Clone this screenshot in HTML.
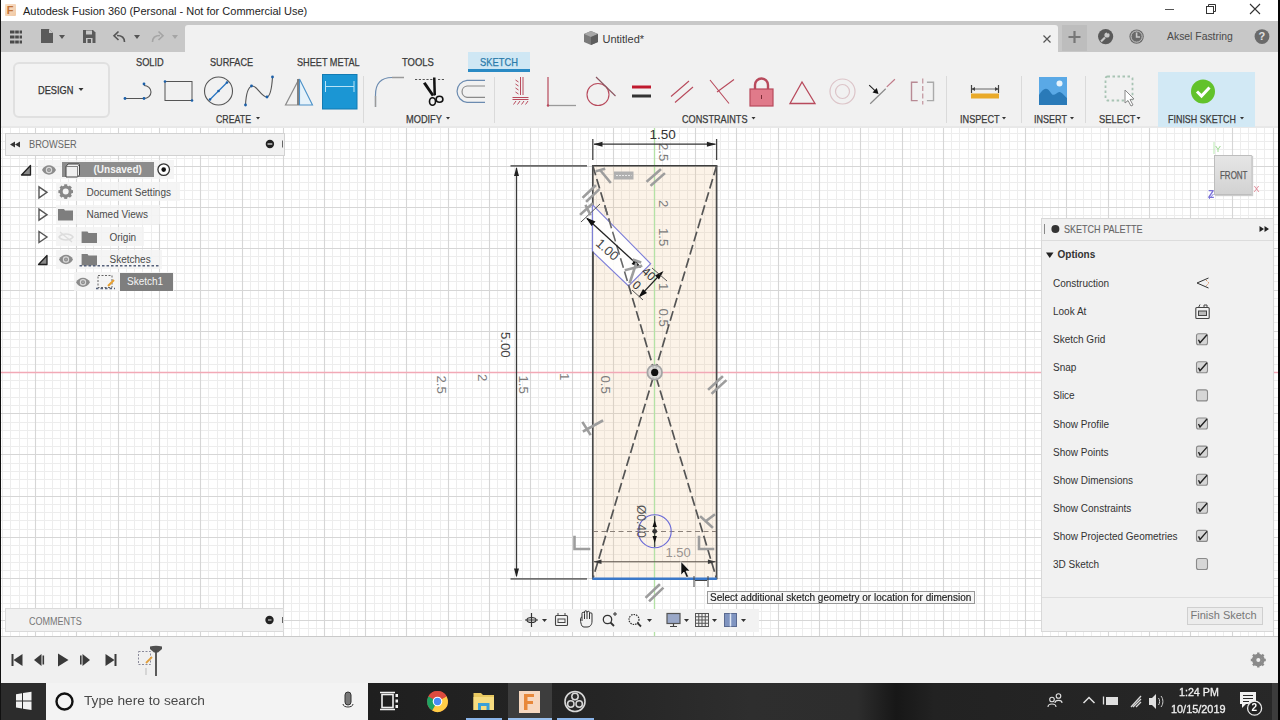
<!DOCTYPE html>
<html><head><meta charset="utf-8">
<style>
*{margin:0;padding:0;box-sizing:border-box}
html,body{width:1280px;height:720px;overflow:hidden;background:#fff;font-family:"Liberation Sans",sans-serif;color:#333}
.a{position:absolute}
.t{position:absolute;white-space:nowrap;line-height:1}
.lbl{position:absolute;white-space:nowrap;line-height:1;font-size:10.5px;color:#3a3a3a;transform-origin:0 0;-webkit-text-stroke:0.25px currentColor}
svg{position:absolute;overflow:visible}
#wrap{position:absolute;left:0;top:0;width:1280px;height:720px;overflow:hidden;filter:blur(0.5px)}
</style></head>
<body><div id="wrap">
<!-- TITLE BAR -->
<div class="a" style="left:0;top:0;width:1280px;height:22px;background:#fff"></div>
<div class="a" style="left:4.6px;top:3.8px;width:11.2px;height:12.5px;border-radius:1px;background:linear-gradient(135deg,#f9e2cc,#f1c9a4)"></div>
<div class="t" style="left:6.8px;top:4.8px;font-size:11px;font-weight:700;color:#c27236">F</div>
<div class="t" style="left:23px;top:5.7px;font-size:11px;color:#1e1e1e">Autodesk Fusion 360 (Personal - Not for Commercial Use)</div>
<svg style="left:0;top:0" width="1280" height="22">
 <path d="M1165 9.5H1174" stroke="#555" stroke-width="1"/>
 <rect x="1206.5" y="6.5" width="7" height="7" fill="none" stroke="#333" stroke-width="1"/>
 <path d="M1208.5 6.5V4.5H1215.5V11.5H1213.5" fill="none" stroke="#333" stroke-width="1"/>
 <path d="M1250 4L1260 14M1260 4L1250 14" stroke="#333" stroke-width="1.1"/>
</svg>

<!-- TAB BAR -->
<div class="a" style="left:0;top:21px;width:1278px;height:31px;background:#c8c8c8"></div>
<div class="a" style="left:185px;top:25px;width:873px;height:27px;background:#f1f1f1;border-radius:3px 3px 0 0"></div>
<div class="a" style="left:1062px;top:25px;width:25px;height:26px;background:#bdbdbd"></div>
<svg style="left:0;top:22px" width="1280" height="30">
 <!-- grid icon -->
 <g fill="#4a4a4a">
  <rect x="10" y="8.5" width="4.5" height="3"/><rect x="15.2" y="8.5" width="3.6" height="3"/><rect x="19.6" y="8.5" width="2.4" height="3"/>
  <rect x="10" y="13.5" width="4.5" height="3"/><rect x="15.2" y="13.5" width="3.6" height="3"/><rect x="19.6" y="13.5" width="2.4" height="3"/>
  <rect x="10" y="18.5" width="4.5" height="3"/><rect x="15.2" y="18.5" width="3.6" height="3"/><rect x="19.6" y="18.5" width="2.4" height="3"/>
 </g>
 <!-- file -->
 <path d="M41 7H49L53 11V21H41Z" fill="#5a5a5a"/>
 <path d="M49 7V11H53" fill="#c8c8c8"/>
 <path d="M59 13H65L62 17Z" fill="#555"/>
 <!-- save -->
 <path d="M83 8H93L95.5 10.5V21H83Z" fill="#5a5a5a"/>
 <rect x="86" y="8.5" width="6" height="4" fill="#c8c8c8"/>
 <rect x="86" y="16" width="6.5" height="5" fill="#c8c8c8"/>
 <rect x="87.5" y="17" width="3.5" height="4" fill="#5a5a5a"/>
 <!-- undo -->
 <path d="M124.5 20C124.5 15 122 13.5 117 13.5" fill="none" stroke="#555" stroke-width="1.6"/>
 <path d="M118.5 9.5L114 13.8L118.5 18" fill="none" stroke="#555" stroke-width="1.6"/>
 <path d="M134 13H140L137 17Z" fill="#555"/>
 <!-- redo -->
 <path d="M152.5 20C152.5 15 155 13.5 160 13.5" fill="none" stroke="#a5a5a5" stroke-width="1.6"/>
 <path d="M158.5 9.5L163 13.8L158.5 18" fill="none" stroke="#a5a5a5" stroke-width="1.6"/>
 <path d="M172 13H178L175 17Z" fill="#a5a5a5"/>
 <!-- doc cube -->
 <path d="M584 12L591 9L598 12V20L591 23L584 20Z" fill="#7a7a7a"/>
 <path d="M584 12L591 15L598 12L591 9Z" fill="#a8a8a8"/>
 <path d="M591 15V23L598 20V12Z" fill="#5e5e5e"/>
 <!-- close x -->
 <path d="M1043.5 13.5L1050.5 20.5M1050.5 13.5L1043.5 20.5" stroke="#555" stroke-width="1.2"/>
 <!-- plus -->
 <path d="M1074.5 9V21M1068.5 15H1080.5" stroke="#777" stroke-width="2.2"/>
 <!-- wrench -->
 <circle cx="1105.6" cy="14.6" r="7.6" fill="#5a5a5a"/>
 <path d="M1101 19.5L1105 15.5" stroke="#c8c8c8" stroke-width="2.2"/>
 <circle cx="1107" cy="13" r="2.6" fill="#c8c8c8"/>
 <path d="M1107 10.5L1110.5 10" stroke="#5a5a5a" stroke-width="2"/>
 <!-- clock -->
 <circle cx="1136.6" cy="14.6" r="7.2" fill="#6a6a6a"/>
 <circle cx="1136.6" cy="14.6" r="5.6" fill="none" stroke="#c8c8c8" stroke-width="1"/>
 <path d="M1136.6 10.5V15H1140" fill="none" stroke="#c8c8c8" stroke-width="1.6"/>
 <!-- help -->
 <circle cx="1262" cy="14.6" r="7.4" fill="#6a6a6a"/>
</svg>
<div class="t" style="left:1167px;top:32px;font-size:10.4px;color:#4a4a4a">Aksel Fastring</div>
<div class="t" style="left:1258.5px;top:31px;font-size:11px;font-weight:700;color:#e0e0e0">?</div>
<div class="t" style="left:602.5px;top:33.7px;font-size:11px;color:#3a3a3a">Untitled*</div>

<!-- TOOLBAR -->
<div class="a" style="left:0;top:52px;width:1278px;height:76px;background:#f1f1f1"></div>
<div class="a" style="left:0;top:126px;width:1278px;height:2px;background:#e8e8e8"></div>
<div class="a" style="left:13px;top:62px;width:97px;height:56px;border:2px solid #e0e0e0;border-radius:6px;background:#f3f3f3"></div>
<div class="lbl" style="left:38px;top:85px;font-size:10.5px;color:#333;transform:scaleX(0.88)">DESIGN</div>
<div class="a" style="left:468px;top:52px;width:62px;height:20px;background:#cfe7f4"></div>
<div class="a" style="left:468px;top:69px;width:62px;height:2.5px;background:#2a8ac4"></div>
<div class="lbl" style="left:136px;top:56.8px;transform:scaleX(0.88)">SOLID</div>
<div class="lbl" style="left:210px;top:56.8px;transform:scaleX(0.87)">SURFACE</div>
<div class="lbl" style="left:297px;top:56.8px;transform:scaleX(0.87)">SHEET METAL</div>
<div class="lbl" style="left:402px;top:56.8px;transform:scaleX(0.9)">TOOLS</div>
<div class="lbl" style="left:480px;top:56.8px;color:#2b7bab;transform:scaleX(0.89)">SKETCH</div>
<div class="lbl" style="left:216px;top:114px;transform:scaleX(0.84)">CREATE</div>
<div class="lbl" style="left:406px;top:114px;transform:scaleX(0.88)">MODIFY</div>
<div class="lbl" style="left:682px;top:114px;transform:scaleX(0.87)">CONSTRAINTS</div>
<div class="lbl" style="left:960px;top:114px;transform:scaleX(0.87)">INSPECT</div>
<div class="lbl" style="left:1034px;top:114px;transform:scaleX(0.86)">INSERT</div>
<div class="lbl" style="left:1099px;top:114px;transform:scaleX(0.89)">SELECT</div>
<div class="a" style="left:1158px;top:72px;width:97px;height:55px;background:#d2e9f5"></div>
<div class="lbl" style="left:1168px;top:114px;transform:scaleX(0.85)">FINISH SKETCH</div>
<svg style="left:0;top:0" width="1280" height="130">
 <g fill="#333">
  <path d="M78.5 88H83.5L81 91Z"/>
  <path d="M256 117H260L258 119.5Z"/>
  <path d="M446 117H450L448 119.5Z"/>
  <path d="M751.5 117H755.5L753.5 119.5Z"/>
  <path d="M1002 117H1006L1004 119.5Z"/>
  <path d="M1070 117H1074L1072 119.5Z"/>
  <path d="M1136.5 117H1140.5L1138.5 119.5Z"/>
  <path d="M1240 117H1244L1242 119.5Z"/>
 </g>
 <!-- separators -->
 <g stroke="#dadada" stroke-width="1">
  <path d="M363.5 76V123"/><path d="M494.5 77V123"/><path d="M946.5 76V123"/><path d="M1021.5 76V123"/><path d="M1085.5 76V123"/>
 </g>
 <!-- line+arc -->
 <path d="M125 98.5H145" stroke="#555" stroke-width="1"/>
 <path d="M144 85.5A7 6.5 0 0 1 144 98.5" fill="none" stroke="#555" stroke-width="1.1"/>
 <g fill="#1b5fa8"><circle cx="125" cy="98.5" r="1.4"/><circle cx="144" cy="98.5" r="1.4"/><circle cx="144" cy="84" r="1.4"/></g>
 <!-- rect -->
 <rect x="165" y="81.5" width="27" height="19" fill="none" stroke="#555" stroke-width="1"/>
 <g fill="#1b5fa8"><circle cx="165" cy="81.5" r="1.3"/><circle cx="192" cy="100.5" r="1.3"/></g>
 <!-- circle -->
 <circle cx="218.5" cy="91" r="14" fill="none" stroke="#555" stroke-width="1.1"/>
 <path d="M210 99.5L227 82.5" stroke="#2673c2" stroke-width="1.2"/>
 <g fill="#1b5fa8"><circle cx="210" cy="99.5" r="1.3"/><circle cx="218.5" cy="91" r="1.3"/><circle cx="227" cy="82.5" r="1.3"/></g>
 <!-- spline -->
 <path d="M245.5 105C246 95 248 87 252 86C257 85 261 97 267 97C271 96 272 85 272.5 77" fill="none" stroke="#555" stroke-width="1.1"/>
 <g fill="#1b5fa8"><circle cx="245.5" cy="105" r="1.4"/><circle cx="251.5" cy="86" r="1.4"/><circle cx="267" cy="97" r="1.4"/><circle cx="272.5" cy="77" r="1.4"/></g>
 <!-- mirror triangle -->
 <path d="M299 79L285.5 105H299" fill="none" stroke="#8a8a8a" stroke-width="1.2"/>
 <path d="M299.5 79V105H312.5Z" fill="#e6f2fa" stroke="#4a90c8" stroke-width="1.1"/>
 <path d="M298 79V105" stroke="#777" stroke-width="1.8"/>
 <!-- blue dim box -->
 <rect x="322.5" y="74.5" width="34.5" height="34.5" fill="#1b96d4" stroke="#137bb3" stroke-width="1"/>
 <path d="M325.5 86.5H354" stroke="#b8e2f6" stroke-width="1"/>
 <path d="M325.5 81V92M354 81V92" stroke="#b8e2f6" stroke-width="1"/>
 <!-- fillet -->
 <path d="M375.5 107V95C375.5 83 381 77.5 392 77.5H404" fill="none" stroke="#6b8bb0" stroke-width="1.2"/>
 <path d="M375.5 107V96M392 77.5H404" stroke="#9a9a9a" stroke-width="1.4"/>
 <!-- scissors -->
 <path d="M415 79.5H434M438 79.5H445" stroke="#555" stroke-width="1" stroke-dasharray="2.2 1.6"/>
 <path d="M423 83.5L425.5 82L434 94.5L432 96.5Z" fill="#111"/>
 <path d="M433 77.5L435.5 77.5L436 95L433.5 96Z" fill="#111"/>
 <ellipse cx="432.5" cy="101.5" rx="3" ry="3.8" fill="none" stroke="#111" stroke-width="1.6"/>
 <ellipse cx="439.5" cy="99.3" rx="3.4" ry="3" fill="none" stroke="#111" stroke-width="1.6"/>
 <!-- offset -->
 <path d="M485 80.4H467A11 11 0 0 0 467 102.3H485" fill="none" stroke="#6b8bb0" stroke-width="1.2"/>
 <path d="M485 86H467A5.7 5.7 0 0 0 467 97.3H485" fill="none" stroke="#8a8a8a" stroke-width="1.2"/>
 <!-- coincident/horiz constraint -->
 <g stroke="#b84a5c" stroke-width="1" fill="none">
  <path d="M520.5 77V95M523 77V95"/>
  <path d="M512.5 97.5H528.5M512.5 99.5H528.5"/>
  <path d="M515.5 80l3 2M515.5 84l3 2M515.5 88l3 2M515.5 92l3 2"/>
  <path d="M513.5 104.5l2.5 -3.5M517.5 104.5l2.5 -3.5M521.5 104.5l2.5 -3.5M525.5 104.5l2.5 -3.5"/>
 </g>
 <!-- perpendicular L -->
 <path d="M548 77V105.5" stroke="#b84a5c" stroke-width="1.2"/>
 <path d="M548 105.5H576" stroke="#9a9a9a" stroke-width="1.3"/>
 <circle cx="548" cy="105.5" r="1.2" fill="#b84a5c"/>
 <!-- tangent -->
 <circle cx="598" cy="94.5" r="11" fill="none" stroke="#b84a5c" stroke-width="1.1"/>
 <path d="M596 77L615.5 96" stroke="#8a5560" stroke-width="1.1"/>
 <!-- equal -->
 <path d="M632 87H651" stroke="#c01a2e" stroke-width="3"/>
 <path d="M632 96H651" stroke="#333" stroke-width="3"/>
 <!-- parallel -->
 <path d="M671 96.5L689 81M675 102.5L693 87" stroke="#b84a5c" stroke-width="1.1"/>
 <!-- perpendicular X -->
 <path d="M710 80L729 103.5M717 92L734 79.5" stroke="#b84a5c" stroke-width="1.1"/>
 <!-- lock -->
 <path d="M755 89V85A6.5 6.5 0 0 1 768 85V89" fill="none" stroke="#b84a5c" stroke-width="2.4"/>
 <rect x="750" y="89" width="23" height="17" fill="#e07a8a" stroke="#b84a5c" stroke-width="1.2"/>
 <path d="M761.5 95V99" stroke="#7a2a35" stroke-width="1"/>
 <!-- triangle -->
 <path d="M802 82L790 103.5H815Z" fill="none" stroke="#b84a5c" stroke-width="1.3"/>
 <!-- concentric -->
 <circle cx="842.5" cy="91.5" r="12.5" fill="none" stroke="#dcc4c8" stroke-width="1.2"/>
 <circle cx="842.5" cy="91.5" r="7" fill="none" stroke="#dcc4c8" stroke-width="1.2"/>
 <!-- midpoint -->
 <path d="M870.2 103.8L885.7 88.7" stroke="#8a8a8a" stroke-width="1.2"/>
 <path d="M886.8 86.9L894.9 79.2" stroke="#c07a88" stroke-width="1.2"/>
 <path d="M869.2 85.1L876 91.6" stroke="#222" stroke-width="1.1"/>
 <path d="M878.5 94L872.5 92.5L876.8 88Z" fill="#111"/>
 <!-- symmetry -->
 <path d="M917.7 82.3H911.5V100.6H917.7" fill="none" stroke="#b88a94" stroke-width="1.4"/>
 <path d="M926.9 82.3H933.5V100.6H926.9" fill="none" stroke="#aaa" stroke-width="1.4"/>
 <path d="M922.7 78.5V104.5" stroke="#c8a0a8" stroke-width="1.4" stroke-dasharray="5 2.5"/>
 <!-- inspect -->
 <path d="M971.5 89H998.5" stroke="#666" stroke-width="1"/>
 <path d="M971.5 85V93M998.5 85V93" stroke="#444" stroke-width="1.2"/>
 <path d="M975 87L971.5 89L975 91ZM995 87L998.5 89L995 91Z" fill="#444"/>
 <rect x="971" y="93.5" width="28" height="5" fill="#e9aa2a"/>
 <!-- insert image -->
 <rect x="1039" y="77" width="28" height="28" fill="#5aa9e6"/>
 <path d="M1039 105V95C1043 88 1047 86 1051 93C1054 98 1057 91 1060 92C1063 93 1065 97 1067 98V105Z" fill="#2a7ab8"/>
 <circle cx="1059.5" cy="83.5" r="3" fill="#e8f4fc"/>
 <!-- select -->
 <rect x="1105.5" y="76.5" width="27" height="24" rx="2" fill="none" stroke="#a8c4b4" stroke-width="1.8" stroke-dasharray="2.5 2.5"/>
 <path d="M1125 90V103L1128 100.5L1131 106L1133 105L1130 99.5L1134 99Z" fill="#fff" stroke="#888" stroke-width="1"/>
 <!-- finish check -->
 <circle cx="1203" cy="91.5" r="12" fill="#62c22a"/>
 <path d="M1197 91.5L1201.5 96L1209.5 87.5" fill="none" stroke="#fff" stroke-width="3"/>
</svg>

<!-- CANVAS -->
<div class="a" style="left:0;top:128px;width:1278px;height:508px;background:#fff"></div>
<svg style="left:0;top:0" width="1280" height="720">
 <defs><clipPath id="cc"><rect x="0" y="128" width="1278" height="508"/></clipPath></defs>
 <g clip-path="url(#cc)">
 <path d="M2.5 128V636M10.5 128V636M19.5 128V636M27.5 128V636M44.5 128V636M52.5 128V636M60.5 128V636M68.5 128V636M85.5 128V636M93.5 128V636M101.5 128V636M110.5 128V636M126.5 128V636M134.5 128V636M142.5 128V636M151.5 128V636M167.5 128V636M176.5 128V636M184.5 128V636M192.5 128V636M208.5 128V636M217.5 128V636M225.5 128V636M233.5 128V636M250.5 128V636M258.5 128V636M266.5 128V636M274.5 128V636M291.5 128V636M299.5 128V636M308.5 128V636M316.5 128V636M332.5 128V636M340.5 128V636M349.5 128V636M357.5 128V636M374.5 128V636M382.5 128V636M390.5 128V636M398.5 128V636M415.5 128V636M423.5 128V636M431.5 128V636M440.5 128V636M456.5 128V636M464.5 128V636M472.5 128V636M481.5 128V636M497.5 128V636M506.5 128V636M514.5 128V636M522.5 128V636M538.5 128V636M547.5 128V636M555.5 128V636M563.5 128V636M580.5 128V636M588.5 128V636M596.5 128V636M604.5 128V636M621.5 128V636M629.5 128V636M638.5 128V636M646.5 128V636M662.5 128V636M670.5 128V636M679.5 128V636M687.5 128V636M704.5 128V636M712.5 128V636M720.5 128V636M728.5 128V636M745.5 128V636M753.5 128V636M761.5 128V636M770.5 128V636M786.5 128V636M794.5 128V636M802.5 128V636M811.5 128V636M827.5 128V636M836.5 128V636M844.5 128V636M852.5 128V636M868.5 128V636M877.5 128V636M885.5 128V636M893.5 128V636M910.5 128V636M918.5 128V636M926.5 128V636M934.5 128V636M951.5 128V636M959.5 128V636M968.5 128V636M976.5 128V636M992.5 128V636M1000.5 128V636M1009.5 128V636M1017.5 128V636M1034.5 128V636M1042.5 128V636M1050.5 128V636M1058.5 128V636M1075.5 128V636M1083.5 128V636M1091.5 128V636M1100.5 128V636M1116.5 128V636M1124.5 128V636M1132.5 128V636M1141.5 128V636M1157.5 128V636M1166.5 128V636M1174.5 128V636M1182.5 128V636M1198.5 128V636M1207.5 128V636M1215.5 128V636M1223.5 128V636M1240.5 128V636M1248.5 128V636M1256.5 128V636M1264.5 128V636M0 133.5H1280M0 141.5H1280M0 149.5H1280M0 158.5H1280M0 174.5H1280M0 182.5H1280M0 190.5H1280M0 199.5H1280M0 215.5H1280M0 224.5H1280M0 232.5H1280M0 240.5H1280M0 256.5H1280M0 265.5H1280M0 273.5H1280M0 281.5H1280M0 298.5H1280M0 306.5H1280M0 314.5H1280M0 322.5H1280M0 339.5H1280M0 347.5H1280M0 356.5H1280M0 364.5H1280M0 380.5H1280M0 388.5H1280M0 397.5H1280M0 405.5H1280M0 422.5H1280M0 430.5H1280M0 438.5H1280M0 446.5H1280M0 463.5H1280M0 471.5H1280M0 479.5H1280M0 488.5H1280M0 504.5H1280M0 512.5H1280M0 520.5H1280M0 529.5H1280M0 545.5H1280M0 554.5H1280M0 562.5H1280M0 570.5H1280M0 586.5H1280M0 595.5H1280M0 603.5H1280M0 611.5H1280M0 628.5H1280" stroke="#ededed" stroke-width="1" fill="none"/><path d="M35.5 128V636M76.5 128V636M118.5 128V636M159.5 128V636M200.5 128V636M242.5 128V636M283.5 128V636M324.5 128V636M365.5 128V636M406.5 128V636M448.5 128V636M489.5 128V636M530.5 128V636M572.5 128V636M613.5 128V636M654.5 128V636M695.5 128V636M736.5 128V636M778.5 128V636M819.5 128V636M860.5 128V636M902.5 128V636M943.5 128V636M984.5 128V636M1025.5 128V636M1066.5 128V636M1108.5 128V636M1149.5 128V636M1190.5 128V636M1232.5 128V636M1273.5 128V636M0 166.5H1280M0 207.5H1280M0 248.5H1280M0 290.5H1280M0 331.5H1280M0 372.5H1280M0 413.5H1280M0 454.5H1280M0 496.5H1280M0 537.5H1280M0 578.5H1280M0 620.5H1280" stroke="#d6d6d6" stroke-width="1.1" fill="none"/>
 <!-- rect fill -->
 <rect x="592.5" y="165.5" width="124" height="413" fill="#f0c38c" fill-opacity="0.2"/>
 <!-- axes -->
 <path d="M0 372.5H1278" stroke="#f2a9b6" stroke-width="1.6"/>
 <path d="M654.5 128V636" stroke="#b4e2a6" stroke-width="1.3"/>
 <!-- grid labels -->
 <g font-family="Liberation Sans" font-size="13.2" fill="#7c7c7c">
  <text transform="translate(658.5,143) rotate(90)">2.5</text>
  <text transform="translate(658.5,200) rotate(90)">2</text>
  <text transform="translate(658.5,228) rotate(90)">1.5</text>
  <text transform="translate(658.5,283) rotate(90)">1</text>
  <text transform="translate(658.5,308.5) rotate(90)">0.5</text>
  <text transform="translate(436.5,375.5) rotate(90)">2.5</text>
  <text transform="translate(477.5,374) rotate(90)">2</text>
  <text transform="translate(518.5,375.5) rotate(90)">1.5</text>
  <text transform="translate(559.5,373) rotate(90)">1</text>
  <text transform="translate(601,375.5) rotate(90)">0.5</text>
 </g>
 <!-- dim: vertical 5.00 -->
 <path d="M510.5 165.8H587" stroke="#6a6a6a" stroke-width="1.8"/>
 <path d="M510.5 578.8H587" stroke="#707070" stroke-width="1.8"/>
 <path d="M516.5 168V576" stroke="#3a3a3a" stroke-width="1.3"/>
 <path d="M516.5 167L514 176H519ZM516.5 577.5L514 568.5H519Z" fill="#222"/>
 <text transform="translate(500.5,332) rotate(90)" font-family="Liberation Sans" font-size="13.2" fill="#444">5.00</text>
 <!-- dim: horizontal 1.50 top -->
 <path d="M592.8 139V160M716.6 139V160" stroke="#444" stroke-width="1.3"/>
 <path d="M594 144.2H715.5" stroke="#333" stroke-width="1.3"/>
 <path d="M593.5 144.2L602.5 141.7V146.7ZM715.9 144.2L706.9 141.7V146.7Z" fill="#222"/>
 <text x="649.5" y="138.5" font-family="Liberation Sans" font-size="13.5" fill="#333">1.50</text>
 <!-- rect edges -->
 <path d="M592.8 165.7H716.6" stroke="#3d3d3d" stroke-width="1.6"/>
 <path d="M592.8 165V579.5M716.6 165V579.5" stroke="#4a4a4a" stroke-width="1.7"/>
 <!-- dashed construction -->
 <g stroke="#555" stroke-width="1.7" stroke-dasharray="10 3.8" fill="none">
  <path d="M592.8 165.7L654.7 372.4L592.8 578.8"/>
  <path d="M716.6 165.7L654.7 372.4L716.6 578.8"/>
 </g>
 <!-- horizontal dashed at circle -->
 <path d="M593 531.5H716" stroke="#8a8078" stroke-width="1.2" stroke-dasharray="5 3.5"/>
 <!-- bottom blue edge -->
 <path d="M592.5 578.8H716.7" stroke="#3a78c9" stroke-width="2.4"/>
 <!-- center point -->
 <circle cx="654.7" cy="372.4" r="7.3" fill="#d8d8d8" fill-opacity="0.85" stroke="#a5a5a5" stroke-width="1.8"/>
 <circle cx="654.7" cy="372.4" r="3.6" fill="#111"/>
 <!-- circle -->
 <circle cx="654.7" cy="531.3" r="16.5" fill="none" stroke="#6a6ad8" stroke-width="1.1"/>
 <circle cx="654.7" cy="531.3" r="2.4" fill="#333"/>
 <path d="M654.7 516V547" stroke="#333" stroke-width="1.1"/>
 <path d="M654.7 520L652.5 527H656.9ZM654.7 543L652.5 536H656.9Z" fill="#111"/>
 <text transform="translate(636.5,505) rotate(90)" font-family="Liberation Sans" font-size="12" fill="#555">&#216;0.40</text>
 <!-- bottom dim 1.50 -->
 <path d="M594 561.7H715.5" stroke="#5a5048" stroke-width="1.1"/>
 <path d="M593.5 561.7L601.5 559.5V564ZM715.9 561.7L707.9 559.5V564Z" fill="#3a3a3a"/>
 <text x="665.5" y="556.5" font-family="Liberation Sans" font-size="13" fill="#9a9490">1.50</text>
 <path d="M694 576V587M708 576V587M695 580.5H707" stroke="#444" stroke-width="1"/>
 <!-- cursor -->
 <path d="M681 561.5V575L684 572L686.5 577.5L688.5 576.5L686 571H690Z" fill="#111" stroke="#fff" stroke-width="0.6"/>
 <!-- white slot box w/ 1.00 dim -->
 <path d="M592.4 204.7L650.7 263.75L628.5 286L592.4 251.5Z" fill="#ffffff" fill-opacity="0.88" stroke="#7d7ed8" stroke-width="1.1"/>
 <path d="M592.8 251.5V290" stroke="#4a4a4a" stroke-width="1.7"/>
 <path d="M603.5 201.5L629 286.5" stroke="#666" stroke-width="1.5" stroke-dasharray="10 3.8" stroke-dashoffset="9.76"/>
  <path d="M587 218.5L640 267" stroke="#222" stroke-width="1.3"/>
 <path d="M586 217.5L595.5 221.5L591.5 226ZM641 268L631.5 264L635.5 259.5Z" fill="#111"/>
 <path d="M581 222L600 204" stroke="#555" stroke-width="1"/>
 <text transform="translate(595,244.5) rotate(42)" font-family="Liberation Sans" font-size="13" fill="#444">1.00</text>
 <path d="M640 296L662 272.5" stroke="#222" stroke-width="1.1"/>
 <path d="M638.5 297.5L643 289L647 293ZM663.5 271L659 279.5L655 275.5Z" fill="#111"/>
 <path d="M632 290L643 300M652 268L667 281" stroke="#444" stroke-width="0.9"/>
 <text transform="translate(641,272.5) rotate(42)" font-family="Liberation Sans" font-size="12" fill="#333">40</text>
 <text transform="translate(631.5,286) rotate(42)" font-family="Liberation Sans" font-size="12" fill="#333">0</text>
 <!-- constraint glyphs (gray) -->
 <g stroke="#9d9d9d" stroke-width="2.6" fill="none" stroke-linecap="square">
  <path d="M597 171L604 169M600.5 170.5L610 182"/>
  <path d="M647.5 181L660 170M651.5 185L664 174"/>
  <path d="M709 389L722 377M712.5 393L725.5 381"/>
  <path d="M646.5 597L659 585M650 600.5L662.5 588.5"/>
  <path d="M583.5 197L595 186M587 201L598.5 190"/><path d="M581 214L592 204M586 206L590 214"/>
  <path d="M584 431L602 421M583 423L590 434"/>
  <path d="M574.5 537V549M574.5 549H589"/>
  <path d="M699 537V549M699 549H713"/>
  <path d="M701 517L712 527M706 521L714 515"/>
  <path d="M630 282L636 264M626 270L641 266M634 260L640 262"/>
 </g>
 <rect x="614" y="171.5" width="19.5" height="8" fill="#b0b0b0"/><path d="M616 175.5H631.5" stroke="#e8e8e8" stroke-width="1" stroke-dasharray="2 1"/>
 </g>
</svg>

<!-- BROWSER -->
<div class="a" style="left:5px;top:132.5px;width:280px;height:23px;background:#f1f1f1;border:1.3px solid #d2d2d2"></div>
<div class="lbl" style="left:29px;top:139.3px;font-size:10.5px;color:#666;-webkit-text-stroke:0;transform:scaleX(0.88)">BROWSER</div>
<div class="a" style="left:38px;top:160px;width:136px;height:19px;background:#f2f2f2;opacity:.8"></div>
<div class="a" style="left:56px;top:182px;width:124px;height:19px;background:#f2f2f2;opacity:.8"></div>
<div class="a" style="left:56px;top:205px;width:104px;height:19px;background:#f2f2f2;opacity:.8"></div>
<div class="a" style="left:56px;top:227px;width:88px;height:19px;background:#f2f2f2;opacity:.8"></div>
<div class="a" style="left:56px;top:250px;width:106px;height:19px;background:#f2f2f2;opacity:.8"></div>
<div class="a" style="left:74px;top:272px;width:100px;height:19px;background:#f2f2f2;opacity:.8"></div>
<div class="a" style="left:62px;top:162px;width:91.5px;height:15px;background:#8c8c8c"></div>
<div class="t" style="left:93.5px;top:165px;font-size:10px;font-weight:700;color:#f4f4f4">(Unsaved)</div>
<div class="a" style="left:119.5px;top:273px;width:53px;height:17.5px;background:#7e7e7e"></div>
<div class="t" style="left:127px;top:277px;font-size:10px;color:#f4f4f4">Sketch1</div>
<div class="t" style="left:86.5px;top:187.5px;font-size:10px;color:#4a4a4a">Document Settings</div>
<div class="t" style="left:86.5px;top:210px;font-size:10px;color:#4a4a4a">Named Views</div>
<div class="t" style="left:109.5px;top:232.5px;font-size:10px;color:#4a4a4a">Origin</div>
<div class="t" style="left:109.5px;top:255px;font-size:10px;color:#4a4a4a">Sketches</div>
<svg style="left:0;top:0" width="300" height="300">
 <path d="M10 144.5L15 141.5V147.5ZM15 144.5L20 141.5V147.5Z" fill="#333"/>
 <circle cx="269.9" cy="144" r="4.2" fill="#222"/>
 <path d="M267.5 144H272.3" stroke="#ddd" stroke-width="1.3"/>
 <path d="M282.5 140.5V147.5" stroke="#666" stroke-width="1"/>
 <!-- row unsaved -->
 <path d="M21.5 175L30.5 165.5V175Z" fill="#8a8a8a" stroke="#222" stroke-width="1.3" stroke-linejoin="round"/>
 <path d="M42 170C45 163.8 53 163.8 56 170C53 176.2 45 176.2 42 170Z" fill="#8c8c8c"/><circle cx="49" cy="170" r="2.6" fill="none" stroke="#d8d8d8" stroke-width="1.2"/><circle cx="49" cy="170" r="1" fill="#aaa"/>
 <path d="M66 166.5L68 164H79L79.5 164.5V175L77.5 177H66Z" fill="#f0f0f0" stroke="#444" stroke-width="1"/><path d="M66 166.5H77.5V177M77.5 166.5L79.5 164.5" fill="none" stroke="#666" stroke-width="0.8"/>
 <circle cx="163.7" cy="169.6" r="5.8" fill="#fff" stroke="#333" stroke-width="1.3"/>
 <circle cx="163.7" cy="169.6" r="2.3" fill="#111"/>
 <!-- triangles -->
 <g fill="none" stroke="#555" stroke-width="1.4">
  <path d="M39 186.8L47 192.3L39 197.8Z"/>
  <path d="M39 209.2L47 214.7L39 220.2Z"/>
  <path d="M39 231.5L47 237L39 242.5Z"/>
 </g>
 <path d="M38.5 264.5L47 255.5V264.5Z" fill="#8a8a8a" stroke="#222" stroke-width="1.3" stroke-linejoin="round"/>
 <!-- gear -->
 <g fill="#888"><rect x="64.2" y="184.3" width="3" height="3.5" transform="rotate(0 65.7 191.6)"/><rect x="64.2" y="184.3" width="3" height="3.5" transform="rotate(45 65.7 191.6)"/><rect x="64.2" y="184.3" width="3" height="3.5" transform="rotate(90 65.7 191.6)"/><rect x="64.2" y="184.3" width="3" height="3.5" transform="rotate(135 65.7 191.6)"/><rect x="64.2" y="184.3" width="3" height="3.5" transform="rotate(180 65.7 191.6)"/><rect x="64.2" y="184.3" width="3" height="3.5" transform="rotate(225 65.7 191.6)"/><rect x="64.2" y="184.3" width="3" height="3.5" transform="rotate(270 65.7 191.6)"/><rect x="64.2" y="184.3" width="3" height="3.5" transform="rotate(315 65.7 191.6)"/></g>
 <circle cx="65.7" cy="191.6" r="4.6" fill="none" stroke="#888" stroke-width="3.2"/>
 <!-- folders -->
 <path d="M58 209H64L65 210.5H73V220.5H58Z" fill="#7e7e7e"/>
 <path d="M81.6 231.5H87.5L88.5 233H97V243H81.6Z" fill="#7e7e7e"/>
 <path d="M81.6 254H87.5L88.5 255.5H97V265.5H81.6Z" fill="#7e7e7e"/>
 <!-- eye off faded -->
 <path d="M59 237C62 233 70 233 73 237C70 241 62 241 59 237Z" fill="none" stroke="#dcdcdc" stroke-width="1.5"/>
 <path d="M60 232L72 242" stroke="#dcdcdc" stroke-width="1.2"/>
 <!-- eyes -->
 <path d="M59 259.5C62 253.3 70 253.3 73 259.5C70 265.7 62 265.7 59 259.5Z" fill="#8c8c8c"/><circle cx="66" cy="259.5" r="2.6" fill="none" stroke="#d8d8d8" stroke-width="1.2"/><circle cx="66" cy="259.5" r="1" fill="#aaa"/>
 <path d="M76 282.3C79 276.1 87 276.1 90 282.3C87 288.5 79 288.5 76 282.3Z" fill="#8c8c8c"/><circle cx="83" cy="282.3" r="2.6" fill="none" stroke="#d8d8d8" stroke-width="1.2"/><circle cx="83" cy="282.3" r="1" fill="#aaa"/>
 <path d="M79.5 265.8H160" stroke="#55607a" stroke-width="1.6" stroke-dasharray="2.5 2"/>
 <!-- sketch icon -->
 <rect x="98" y="275.5" width="14" height="12" fill="none" stroke="#666" stroke-width="1" stroke-dasharray="2 1.5"/>
 <path d="M108 286L114 280" stroke="#e8a030" stroke-width="2"/>
 <path d="M96 288.5H115" stroke="#55607a" stroke-width="1.4" stroke-dasharray="2.5 2"/>
</svg>

<!-- COMMENTS -->
<div class="a" style="left:5px;top:608px;width:279px;height:24px;background:#f1f1f1;border:1.3px solid #dadada"></div>
<div class="lbl" style="left:29px;top:615.5px;font-size:10.5px;color:#777;-webkit-text-stroke:0;transform:scaleX(0.86)">COMMENTS</div>
<svg style="left:0;top:600px" width="300" height="40">
 <circle cx="269.5" cy="20" r="4.2" fill="#222"/>
 <path d="M268 20H271.5" stroke="#bbb" stroke-width="1.3"/>
 <path d="M282.5 17V23" stroke="#666" stroke-width="1"/>
</svg>

<!-- VIEWCUBE -->
<div class="a" style="left:1213.5px;top:154.5px;width:38px;height:40px;background:linear-gradient(#e6e6e6,#d2d2d2);border:1px solid #bdbdbd;border-right-color:#cfcfcf;box-shadow:1px 1px 1px #ccc"></div>
<div class="lbl" style="left:1219.5px;top:169.5px;font-size:10.5px;color:#5a5a5a;transform:scaleX(0.76)">FRONT</div>
<svg style="left:0;top:0" width="1280" height="220">
 <path d="M1214 154V142" stroke="#b8e8b0" stroke-width="1"/>
 <text x="1215" y="152" font-family="Liberation Sans" font-size="9" fill="#9ad88f">Y</text>
 <path d="M1213.5 194L1209 199" stroke="#8080e0" stroke-width="1"/>
 <text x="1208" y="198" font-family="Liberation Sans" font-size="10" font-weight="700" fill="#7a70d8">Z</text>
 <text x="1253.5" y="192" font-family="Liberation Sans" font-size="9" fill="#e08a98">X</text>
</svg>

<!-- SKETCH PALETTE -->
<div class="a" style="left:1041px;top:217.5px;width:232.5px;height:414px;background:#f1f1f1;border:1px solid #d8d8d8"></div>
<div class="a" style="left:1041.5px;top:240px;width:231.5px;height:1.2px;background:#dcdcdc"></div>
<div class="a" style="left:1041.5px;top:596.5px;width:231.5px;height:1px;background:#dedede"></div>
<div class="lbl" style="left:1064px;top:223.7px;font-size:10.5px;color:#666;-webkit-text-stroke:0.1px #666;transform:scaleX(0.86)">SKETCH PALETTE</div>
<div class="t" style="left:1057.5px;top:250px;font-size:10px;font-weight:700;color:#333">Options</div>
<div class="t" style="left:1053px;top:279.0px;font-size:10px;color:#333">Construction</div>
<div class="t" style="left:1053px;top:307.1px;font-size:10px;color:#333">Look At</div>
<div class="t" style="left:1053px;top:335.2px;font-size:10px;color:#333">Sketch Grid</div>
<div class="t" style="left:1053px;top:363.3px;font-size:10px;color:#333">Snap</div>
<div class="t" style="left:1053px;top:391.4px;font-size:10px;color:#333">Slice</div>
<div class="t" style="left:1053px;top:419.5px;font-size:10px;color:#333">Show Profile</div>
<div class="t" style="left:1053px;top:447.6px;font-size:10px;color:#333">Show Points</div>
<div class="t" style="left:1053px;top:475.7px;font-size:10px;color:#333">Show Dimensions</div>
<div class="t" style="left:1053px;top:503.8px;font-size:10px;color:#333">Show Constraints</div>
<div class="t" style="left:1053px;top:531.9px;font-size:10px;color:#333">Show Projected Geometries</div>
<div class="t" style="left:1053px;top:560.0px;font-size:10px;color:#333">3D Sketch</div>
<div class="a" style="left:1187px;top:606.5px;width:76px;height:18px;background:#ececec;border:1px solid #cfcfcf"></div>
<div class="t" style="left:1190.5px;top:610px;font-size:11px;color:#777">Finish Sketch</div>
<svg style="left:0;top:0" width="1280" height="640">
 <path d="M1044.5 224V234" stroke="#888" stroke-width="1"/>
 <circle cx="1055.4" cy="229" r="4" fill="#333"/>
 <path d="M1259.5 226L1264 229L1259.5 232ZM1264.5 226L1269 229L1264.5 232Z" fill="#222"/>
 <path d="M1046 252.5H1053.5L1049.75 258Z" fill="#222"/>
 <!-- construction icon -->
 <path d="M1208.5 278L1197 283L1208.5 288" fill="none" stroke="#333" stroke-width="1"/>
 <path d="M1206 280L1209 283L1206 286" fill="none" stroke="#d89060" stroke-width="1" stroke-dasharray="1.5 1"/>
 <!-- look at icon -->
 <rect x="1195.8" y="307.5" width="13.4" height="11" rx="1" fill="none" stroke="#444" stroke-width="1.1"/>
 <rect x="1198.5" y="311" width="8" height="4.5" fill="#bbb" stroke="#444" stroke-width="1"/>
 <path d="M1198.5 307.5L1200 304.5M1204 307.5V305H1207V307.5" fill="none" stroke="#444" stroke-width="1"/>
 <g fill="#d6d6d6" stroke="#8a8a8a" stroke-width="1.1">
  <rect x="1196.5" y="333.7" width="11" height="11" rx="2"/>
  <rect x="1196.5" y="361.8" width="11" height="11" rx="2"/>
  <rect x="1196.5" y="389.9" width="11" height="11" rx="2"/>
  <rect x="1196.5" y="418.0" width="11" height="11" rx="2"/>
  <rect x="1196.5" y="446.1" width="11" height="11" rx="2"/>
  <rect x="1196.5" y="474.2" width="11" height="11" rx="2"/>
  <rect x="1196.5" y="502.3" width="11" height="11" rx="2"/>
  <rect x="1196.5" y="530.4" width="11" height="11" rx="2"/>
  <rect x="1196.5" y="558.5" width="11" height="11" rx="2"/>
 </g>
 <g fill="none" stroke="#222" stroke-width="1.4">
  <path transform="translate(0,0.19999999999999996)" d="M1198.5 339.5L1200 342.5L1207 334.5"/>
  <path transform="translate(0,0.30000000000000004)" d="M1198.5 367.5L1200 370.5L1207 362.5"/>
  <path transform="translate(0,0.5)" d="M1198.5 423.5L1200 426.5L1207 418.5"/>
  <path transform="translate(0,0.6000000000000001)" d="M1198.5 451.5L1200 454.5L1207 446.5"/>
  <path transform="translate(0,0.7)" d="M1198.5 479.5L1200 482.5L1207 474.5"/>
  <path transform="translate(0,0.8)" d="M1198.5 507.5L1200 510.5L1207 502.5"/>
  <path transform="translate(0,0.8999999999999999)" d="M1198.5 535.5L1200 538.5L1207 530.5"/>
 </g>
</svg>

<!-- NAV BAR -->
<div class="a" style="left:521.5px;top:609px;width:237.5px;height:23px;background:#f2f2f2"></div>
<svg style="left:0;top:0" width="1280" height="720">
 <g stroke="#333" stroke-width="1.2" fill="none">
  <path d="M525 620H538M531.5 613V627"/>
  <ellipse cx="531.5" cy="620" rx="4.5" ry="2.5"/>
 </g>
 <path d="M542 619H547L544.5 622Z" fill="#333"/>
 <rect x="555.5" y="615.5" width="12" height="10" rx="1" fill="none" stroke="#444" stroke-width="1.1"/>
 <rect x="558" y="619" width="7" height="3.5" fill="none" stroke="#444" stroke-width="1"/>
 <path d="M558 615.5V613M565 615.5V613" stroke="#444" stroke-width="1"/>
 <path d="M582 626C580 622 580 617 582 617V621M582 617V613.5A1 1 0 0 1 584.5 613.5V619M584.5 613V612A1 1 0 0 1 587 612V619M587 612.5A1 1 0 0 1 589.5 612.5V619M589.5 614A1 1 0 0 1 592 614V621C592 625 590 627 587 627H584C583 627 582.5 626.5 582 626" fill="none" stroke="#333" stroke-width="1"/>
 <circle cx="607.5" cy="619.5" r="4.2" fill="none" stroke="#333" stroke-width="1.3"/>
 <path d="M610.5 622.5L614 626" stroke="#333" stroke-width="1.8"/>
 <path d="M613 614H617M615 612V616" stroke="#333" stroke-width="1"/>
 <circle cx="634" cy="619.5" r="5" fill="none" stroke="#333" stroke-width="1.2" stroke-dasharray="1.5 1"/>
 <path d="M637.5 623L641 626.5" stroke="#333" stroke-width="1.8"/>
 <path d="M647 619H652L649.5 622Z" fill="#333"/>
 <rect x="667" y="613.5" width="13" height="10" fill="#9aa8c8" stroke="#555" stroke-width="1.2"/>
 <path d="M670 626.5H677M673.5 623.5V626.5" stroke="#444" stroke-width="1.2"/>
 <path d="M684 619H689L686.5 622Z" fill="#333"/>
 <g stroke="#555" stroke-width="1" fill="none">
  <rect x="695.5" y="613.5" width="13" height="13"/>
  <path d="M698.75 613.5V626.5M702 613.5V626.5M705.25 613.5V626.5M695.5 616.75H708.5M695.5 620H708.5M695.5 623.25H708.5"/>
 </g>
 <path d="M712 619H717L714.5 622Z" fill="#333"/>
 <rect x="724.5" y="613.5" width="12" height="13" fill="#7f94c0" stroke="#5a6a90" stroke-width="1"/>
 <path d="M730.5 613.5V626.5" stroke="#e0e8f4" stroke-width="1.5"/>
 <path d="M741 619H746L743.5 622Z" fill="#333"/>
</svg>

<!-- TOOLTIP -->
<div class="a" style="left:706.5px;top:591px;width:268.5px;height:12.5px;background:#f6f6f6;border:1px solid #999"></div>
<div class="t" style="left:710px;top:592.8px;font-size:10px;color:#1a1a1a;-webkit-text-stroke:0.15px #1a1a1a">Select additional sketch geometry or location for dimension</div>

<!-- TIMELINE -->
<div class="a" style="left:0;top:635.5px;width:1278px;height:47px;background:#f0f0f0;border-top:1.2px solid #c9c9c9"></div>
<svg style="left:0;top:630px" width="1280" height="55">
 <g fill="#3a3a3a">
  <rect x="11.5" y="24" width="2" height="12"/><path d="M13.5 30L22.5 24V36Z"/>
  <path d="M34 30L41.5 24V36Z"/><rect x="42.5" y="25.5" width="1.6" height="9"/>
  <path d="M58 23.5L68.5 30L58 36.5Z"/>
  <rect x="80" y="25.5" width="1.6" height="9"/><path d="M82.5 24L90 30L82.5 36Z"/>
  <path d="M105.5 24L114.5 30L105.5 36Z"/><rect x="114.5" y="24" width="2" height="12"/>
 </g>
 <rect x="138.5" y="21.5" width="12" height="13" fill="none" stroke="#8a8a9a" stroke-width="1" stroke-dasharray="2 1.5"/>
 <path d="M146 33L152 27" stroke="#e0a040" stroke-width="1.8"/>
 <path d="M150 16.5Q156 15 162 16.5V19L158 22.5H154L150 19Z" fill="#505050"/>
 <path d="M156 20V46" stroke="#4a4a4a" stroke-width="1.8"/>
 <path d="M146 38V45" stroke="#bbb" stroke-width="1"/>
 <!-- gear -->
 <circle cx="1258.3" cy="30" r="4.8" fill="none" stroke="#8a8a8a" stroke-width="3"/>
 <path d="M1258.3 22.5V37.5M1250.8 30H1265.8M1253 24.7L1263.6 35.3M1253 35.3L1263.6 24.7" stroke="#8a8a8a" stroke-width="2.4"/>
 <circle cx="1258.3" cy="30" r="2" fill="#f0f0f0"/>
</svg>

<!-- TASKBAR -->
<div class="a" style="left:0;top:682.5px;width:1280px;height:37.5px;background:linear-gradient(90deg,#1f1f1f 0%,#1f1f1f 29%,#252525 47%,#2e2e2e 58.6%,#2d2d2d 67%,#171717 70%,#222 73%,#282828 100%)"></div>
<div class="a" style="left:0;top:682.5px;width:46px;height:37.5px;background:#2c2c2c"></div>
<div class="a" style="left:46px;top:682.5px;width:322px;height:37.5px;background:#f3f3f3"></div>
<div class="a" style="left:507.5px;top:682.5px;width:44.5px;height:37.5px;background:#3d3d3d"></div>
<div class="a" style="left:465.5px;top:718px;width:36.5px;height:2px;background:#8ab4e8"></div>
<div class="a" style="left:507.5px;top:718px;width:44.5px;height:2px;background:#9ac0ee"></div>
<div class="a" style="left:557px;top:718px;width:37px;height:2px;background:#8ab4e8"></div>
<div class="a" style="left:1272px;top:682.5px;width:6px;height:37.5px;background:#3c3c3c"></div>
<div class="t" style="left:84px;top:694px;font-size:13.7px;color:#4a4a4a">Type here to search</div>
<div class="t" style="left:1179px;top:687px;font-size:10.7px;color:#f0f0f0;-webkit-text-stroke:0.3px #f0f0f0">1:24 PM</div>
<div class="t" style="left:1171px;top:704px;font-size:10.9px;color:#f0f0f0;-webkit-text-stroke:0.3px #f0f0f0">10/15/2019</div>
<svg style="left:0;top:682px" width="1280" height="38">
 <!-- windows logo -->
 <g fill="#f2f2f2">
  <path d="M16 12.2L22 11.3V18.4H16Z"/><path d="M23 11.1L31.5 9.8V18.4H23Z"/>
  <path d="M16 19.4H22V26.5L16 25.6Z"/><path d="M23 19.4H31.5V28L23 26.8Z"/>
 </g>
 <circle cx="64.5" cy="19.5" r="8" fill="none" stroke="#111" stroke-width="2.4"/>
 <!-- mic -->
 <rect x="345" y="10" width="6" height="13" rx="3" fill="#777" stroke="#333" stroke-width="1"/>
 <path d="M343 22C343 26 353 26 353 22" fill="none" stroke="#333" stroke-width="1"/>
 <!-- task view -->
 <g fill="none" stroke="#f0f0f0" stroke-width="1.6">
  <rect x="382" y="12.5" width="11" height="13"/>
 </g>
 <path d="M380 10.5H395M380 27.5H395" stroke="#f0f0f0" stroke-width="1.4"/>
 <rect x="395.5" y="12" width="2.5" height="3" fill="#f0f0f0"/><rect x="395.5" y="17.5" width="2.5" height="3" fill="#f0f0f0"/><rect x="395.5" y="23" width="2.5" height="3" fill="#f0f0f0"/>
 <!-- chrome -->
 <circle cx="437.5" cy="19.5" r="10.5" fill="#dd4b3e"/>
 <path d="M437.5 19.5L428.4 14.25A10.5 10.5 0 0 0 432.25 28.6Z" fill="#1da462"/>
 <path d="M437.5 19.5L432.25 28.6A10.5 10.5 0 0 0 447.9 18.2L446.6 14.25Z" fill="#ffcd46"/>
 <path d="M437.5 19.5L446.6 14.25A10.5 10.5 0 0 0 428.4 14.25Z" fill="#dd4b3e"/>
 <circle cx="437.5" cy="19.5" r="4.8" fill="#fff"/>
 <circle cx="437.5" cy="19.5" r="3.7" fill="#4a8af4"/>
 <!-- explorer -->
 <path d="M473.5 11H481L483 13H494V28H473.5Z" fill="#e8c860"/>
 <rect x="473.5" y="15" width="20.5" height="13" fill="#f6dc80"/>
 <path d="M478 21H489.5V28H486.5V24H481V28H478Z" fill="#3aa0d8"/>
 <!-- fusion -->
 <rect x="519" y="9" width="21" height="22" fill="#f7d8c0"/>
 <path d="M524 12H534V15H527.5V19H533V22H527.5V28H524Z" fill="#e8883a"/>
 <!-- obs -->
 <circle cx="575" cy="19.5" r="10" fill="#2a2a2a" stroke="#d8d8d8" stroke-width="1.6"/>
 <g fill="none" stroke="#d8d8d8" stroke-width="1.5">
  <circle cx="575" cy="14.5" r="3.2"/><circle cx="570.8" cy="22" r="3.2"/><circle cx="579.2" cy="22" r="3.2"/>
 </g>
 <!-- tray -->
 <g stroke="#e0e0e0" fill="none" stroke-width="1.1">
  <circle cx="1052" cy="17.5" r="2.3"/><circle cx="1058.5" cy="14" r="2.3"/>
  <path d="M1048 25C1048 21 1056 21 1056 25M1055 21C1055 17.5 1062 17.5 1062 21"/>
  <path d="M1083.5 21L1089 15.5L1094.5 21" stroke-width="1.5"/>
 </g>
 <rect x="1106" y="15" width="12" height="8" fill="#e0e0e0"/>
 <path d="M1103.5 14.5V22.5" stroke="#e0e0e0" stroke-width="1.3"/>
 <path d="M1131 25L1141 14M1133 25L1141 17M1136 25L1141 20" stroke="#d8d8d8" stroke-width="1.3"/>
 <path d="M1149 16H1152L1156 12V27L1152 23H1149Z" fill="#e0e0e0"/>
 <path d="M1158.5 16C1160 18 1160 21 1158.5 23M1161 14C1163.5 17 1163.5 22 1161 25" fill="none" stroke="#cfcfcf" stroke-width="1"/>
 <!-- notif -->
 <path d="M1240 10H1256V22H1246L1242 26V22H1240Z" fill="#f2f2f2"/>
 <path d="M1243 13.5H1253M1243 16.5H1253M1243 19.5H1249" stroke="#2a2a2a" stroke-width="1.1"/>
 <circle cx="1254.6" cy="26.2" r="7" fill="#222" stroke="#e8e8e8" stroke-width="1.3"/>
</svg>
<div class="t" style="left:1251.5px;top:703px;font-size:10px;font-weight:700;color:#fff">2</div>
<!-- left dark edge -->
<div class="a" style="left:0;top:0;width:1.1px;height:720px;background:#111"></div>
<div class="a" style="left:1277.8px;top:0;width:2.2px;height:720px;background:#050505"></div>
</div></body></html>
